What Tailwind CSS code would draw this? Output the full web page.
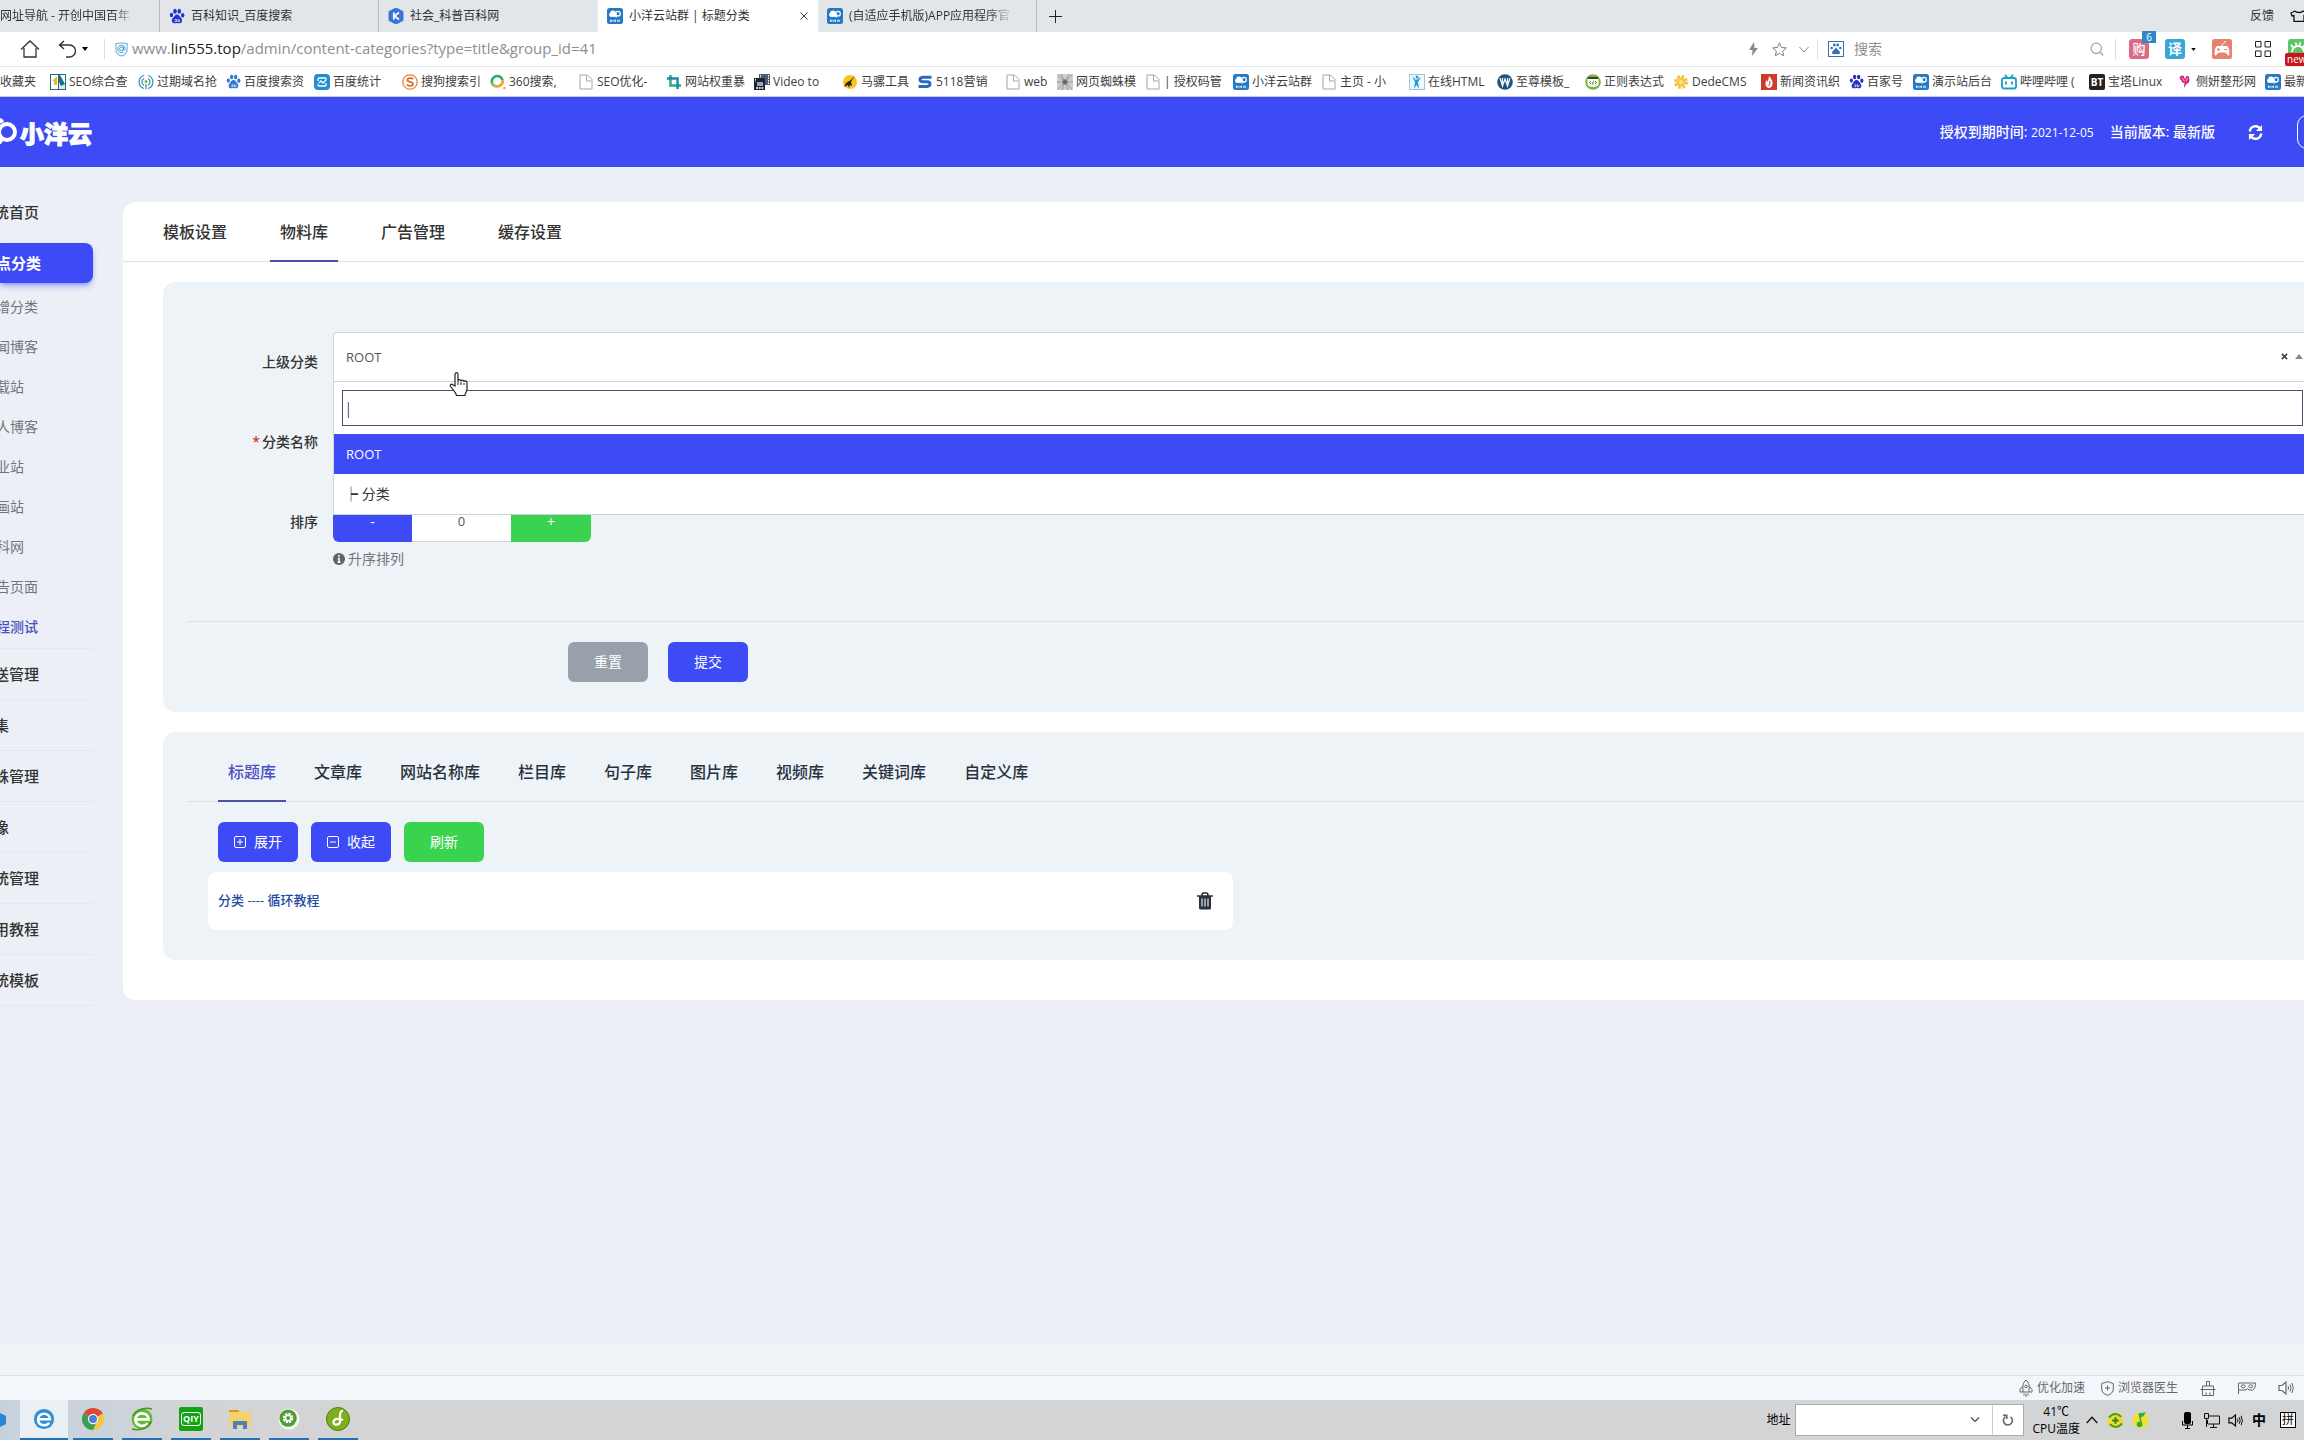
<!DOCTYPE html>
<html lang="zh-CN">
<head>
    <meta charset="UTF-8">
    <meta name="viewport" content="width=device-width, initial-scale=1.0">
    <title>小洋云站群 | 标题分类</title>
    <script src="https://cdn.jsdelivr.net/npm/@tailwindcss/browser@4"></script>
</head>
<body class="bg-[#eceff5] font-['Open_Sans','Noto_Sans_CJK_SC',sans-serif] text-sm text-[#333]">

    <!-- shared icons -->
    <svg class="hidden">
        <symbol id="i-page" viewBox="0 0 16 16"><path d="M2 1h7.5L14 5.500V15H2z" fill="#fff" stroke="#a5a5a5"/><path d="M8.500 1v6H13" fill="none" stroke="#a5a5a5"/></symbol>
        <symbol id="i-paw" viewBox="0 0 16 16"><ellipse cx="2.500" cy="7" rx="1.700" ry="2.300"/><ellipse cx="6" cy="3.200" rx="1.800" ry="2.500"/><ellipse cx="10.300" cy="3.200" rx="1.800" ry="2.500"/><ellipse cx="13.700" cy="7.200" rx="1.700" ry="2.300"/><path d="M8 6.500c2 0 2.700 2 4 3.300 1.700 1.700 1.600 5.400-1.200 5.400-1.200 0-1.700-.3-2.800-.3s-1.700.3-2.800.3c-2.900 0-3-3.800-1.200-5.400C5.300 8.500 6 6.500 8 6.500z"/><path d="M5.800 11.500h1.700v2H6v-1M9 10.800v2.700h1.600v-2" fill="none" stroke="#fff" stroke-width=".7"/></symbol>
        <symbol id="i-cloud" viewBox="0 0 16 16"><rect width="16" height="16" rx="2.500" fill="#2479c4"/><circle cx="6" cy="5.500" r="2.900" fill="#fff"/><circle cx="4" cy="6.800" r="2" fill="#fff"/><rect x="3.500" y="5.500" width="6" height="3.300" fill="#fff"/><circle cx="11" cy="5.700" r="2.300" fill="none" stroke="#fff" stroke-width="1.300"/><path d="M9.200 5.500v4" stroke="#fff" stroke-width="1.200"/><path d="M3 12.700h2.500M6.500 12.700H9M10.300 12.700H13" stroke="#fff" stroke-width="2" stroke-dasharray="1 .4"/></symbol>
        <symbol id="i-speaker" viewBox="0 0 16 16"><path d="M1 5.500h3L8 2v12l-4-3.500H1z" fill="none" stroke="currentColor" stroke-width="1.200"/><path d="M10 6q1.200 2 0 4M12 4.500q2 3.500 0 7M14 3q2.600 5 0 10" fill="none" stroke="currentColor"/></symbol>
        <symbol id="i-e" viewBox="0 0 24 24"><path d="M6.500 12.300h12c0-8-13-8-13 0 0 7.500 9 8 12.300 4" fill="none" stroke="#fff" stroke-width="2.800"/></symbol>
    </svg>

    <div class="flex min-h-screen flex-col overflow-hidden">

        <!-- browser tabs -->
        <div class="flex h-8 items-stretch bg-[#e2e6e9] text-xs text-[#333]">
            <a href="#" class="flex w-[160px] flex-none items-center border-r border-[#b9bec2]"><span class="w-[134px] overflow-hidden mask-r-from-85% whitespace-nowrap">网址导航 - 开创中国百年</span></a>
            <a href="#" class="flex w-[219px] flex-none items-center gap-[6px] border-r border-[#b9bec2] pl-[9px]"><svg class="size-4 fill-[#2b32c8]"><use href="#i-paw"/></svg>百科知识_百度搜索</a>
            <a href="#" class="flex w-[219px] flex-none items-center gap-[6px] pl-[9px]"><svg class="size-4" viewBox="0 0 16 16"><path d="M8 0l7 3.500v9L8 16l-7-3.500v-9z" fill="#3a74d8" stroke="#3a74d8"/><path d="M5.800 4.500v7M11 4.500L6.500 8l4.500 3.500" stroke="#fff" stroke-width="1.800" fill="none"/></svg>社会_科普百科网</a>
            <div class="flex w-[220px] flex-none items-center gap-[6px] bg-white pl-[9px]"><svg class="size-4"><use href="#i-cloud"/></svg><span class="flex-1">小洋云站群 | 标题分类</span>
                <button class="mr-[9px]" aria-label="关闭"><svg class="size-[10px]" viewBox="0 0 10 10"><path d="M1.500 1.500l7 7M8.500 1.500l-7 7" stroke="#333"/></svg></button></div>
            <a href="#" class="flex w-[219px] flex-none items-center gap-[6px] border-r border-[#b9bec2] pl-[9px]"><svg class="size-4 flex-none"><use href="#i-cloud"/></svg><span class="w-[164px] overflow-hidden mask-r-from-85% whitespace-nowrap">(自适应手机版)APP应用程序官</span></a>
            <button class="ml-3" aria-label="新标签页"><svg class="size-[13px]" viewBox="0 0 13 13"><path d="M6.500 0v13M0 6.500h13" stroke="#222"/></svg></button>
            <div class="-mr-1 ml-auto flex items-center gap-4"><button>反馈</button>
                <svg class="h-3 w-[18px]" viewBox="0 0 18 12"><path d="M5 1L1 3l1 3 2-.5V11.500h10V5.500l2 .5 1-3-4-2c-1 2-7 2-8 0z" fill="none" stroke="#111" stroke-width="1.300"/></svg></div>
        </div>

        <!-- address bar -->
        <div class="flex h-[35px] items-center border-b border-[#e3e6e6] bg-white">
            <button class="ml-5" aria-label="主页"><svg class="h-[18px] w-5" viewBox="0 0 20 18"><path d="M1 9.500L10 1l9 8.500M4 8v9h12V8" fill="none" stroke="#333" stroke-width="1.300"/></svg></button>
            <button class="ml-[18px] flex items-center gap-1" aria-label="后退"><svg class="h-[18px] w-5" viewBox="0 0 20 18"><path d="M6 1L1.500 5 6 9M2 5h9.500a6 6 0 0 1 0 12H8" fill="none" stroke="#333" stroke-width="1.400"/></svg><svg class="h-1 w-[6px]" viewBox="0 0 6 4"><path d="M0 0h6L3 4z"/></svg></button>
            <span class="ml-4 h-5 w-px bg-[#ddd]"></span>
            <svg class="ml-[9px] size-[15px]" viewBox="0 0 16 16"><path d="M8 1c3 0 6 1 6 1v6c0 4-3 6-6 7-3-1-6-3-6-7V2s3-1 6-1z" fill="none" stroke="#6cb1dd" stroke-width="1.200"/><circle cx="8" cy="7.300" r="2" fill="none" stroke="#3a93cf"/><path d="M10 5v3.300c1 1.200 1.900 0 1.900-1 0-5.200-7.800-5-7.800 0 0 4 4 4.600 6 3.300" fill="none" stroke="#3a93cf"/></svg>
            <a href="#" class="ml-[3px] text-[15px] text-[#8e8e8e]">www.<span class="text-[#222]">lin555.top</span>/admin/content-categories?type=title&amp;group_id=41</a>
            <div class="ml-auto flex items-center">
                <svg class="h-[14px] w-[9px]" viewBox="0 0 9 14"><path d="M5 0L0 8h3.500L3 14l6-8H5.500z" fill="#8a8a8a"/></svg>
                <svg class="ml-[14px] size-[15px]" viewBox="0 0 16 16"><path d="M8 1l2.100 4.800 5.200.5-4 3.400 1.200 5.100L8 12.100l-4.500 2.700 1.200-5.100-4-3.400 5.200-.5z" fill="none" stroke="#777"/></svg>
                <svg class="ml-3 h-[7px] w-[10px]" viewBox="0 0 10 7"><path d="M.5 1L5 6l4.500-5" fill="none" stroke="#888"/></svg>
                <span class="ml-2 h-5 w-px bg-[#ddd]"></span>
                <svg class="ml-[10px] size-4" viewBox="0 0 16 16"><rect x=".5" y=".5" width="15" height="15" fill="#fff" stroke="#3b6fb5"/><g fill="#3b6fb5"><circle cx="3.700" cy="7" r="1.300"/><circle cx="6.300" cy="4" r="1.400"/><circle cx="9.700" cy="4" r="1.400"/><circle cx="12.300" cy="7" r="1.300"/><path d="M8 6.500l3.800 4.200c.9 2-.6 3-3.800 2.300-3.200.7-4.700-.3-3.800-2.300z"/></g></svg>
                <label class="sr-only" for="web-search">搜索</label>
                <input id="web-search" placeholder="搜索" class="ml-[10px] w-[236px] text-[14px] outline-none placeholder:text-[#8e8e8e]">
                <svg class="size-[14px]" viewBox="0 0 14 14"><circle cx="6.300" cy="6.300" r="5.200" fill="none" stroke="#aaa" stroke-width="1.300"/><path d="M10 10l3 3.500" stroke="#aaa" stroke-width="1.300"/></svg>
                <span class="ml-[11px] h-5 w-px bg-[#ddd]"></span>
                <button class="relative ml-[13px] size-5 rounded-[3px] bg-[#dd6a85] text-[13px] leading-5 font-medium text-white">购<span class="absolute -top-2 left-[13px] h-3 w-[14px] bg-[#2f88cb] text-[10px] leading-3">6</span></button>
                <button class="ml-4 size-5 rounded-[3px] bg-[#35a7db] text-[14px] leading-5 font-bold text-white">译</button>
                <svg class="ml-[6px] h-[3px] w-[5px]" viewBox="0 0 6 4"><path d="M0 0h6L3 4z"/></svg>
                <svg class="ml-4 size-5" viewBox="0 0 20 20"><rect width="20" height="20" rx="2.500" fill="#e58270"/><path d="M10 7c0-4 3-1 3-5" stroke="#fff" fill="none"/><path d="M5 7h10c2 0 3 9 2 9.500-1.500.8-3-3-4-3H7c-1 0-2.500 3.800-4 3C2 16 3 7 5 7z" fill="#fff"/><path d="M5 10.500h3M6.500 9v3M12 10.500h3" stroke="#e58270"/></svg>
                <svg class="ml-[23px] size-4" viewBox="0 0 16 16"><path d="M.5.5h5.500v5.500H.5zM10 .5h5.500v5.500H10zM.5 10h5.500v5.500H.5zM10 10h5.500v5.500H10z" fill="none" stroke="#222"/></svg>
                <div class="relative -mr-1 ml-[17px] h-5 w-5 rounded-[3px] bg-[#5cc46b]"><svg class="size-5" viewBox="0 0 20 20"><path d="M4 13a6 6 0 0 1 12 0M3 6l2 2M7.500 3.500l1 2.500M12.500 3.500l-1 2.500M17 6l-2 2" stroke="#fff" stroke-width="1.800" fill="none"/></svg><span class="absolute -bottom-[7px] -left-[3px] w-8 rounded-[2px] bg-[#c8151b] px-[2px] text-[10px] leading-[13px] text-white">new</span></div>
            </div>
        </div>

        <!-- bookmarks -->
        <nav class="flex h-[30px] items-center border-b border-[#c3cbe8] bg-white text-xs whitespace-nowrap text-[#3d3d3d] *:flex *:flex-none *:items-center *:gap-[3px]">
            <a href="#" class="w-[50px]">收藏夹</a>
            <a href="#" class="w-[88px]"><svg class="size-4" viewBox="0 0 16 16"><rect width="16" height="16" fill="#1b6f86"/><path d="M1 1h7v14H1zM10 1h5v9z" fill="#fff"/><path d="M2 7l5-5v9H4V7z" fill="#e5ba2f"/><path d="M9 15V8l2 4 4-2v5z" fill="#dfe9ec"/></svg>SEO综合查</a>
            <a href="#" class="w-[88px]"><svg class="size-4" viewBox="0 0 16 16" fill="none" stroke="#3f95b8" stroke-width="1.300"><path d="M6 1.500a6.800 6.800 0 0 0 0 13M10 1.500a6.800 6.800 0 0 1 0 13M6 4.500a4 4 0 0 0 0 7M10 4.500a4 4 0 0 1 0 7M8 10v5"/><circle cx="8" cy="7.500" r="1.500" fill="#6fc04c" stroke="none"/></svg>过期域名抢</a>
            <a href="#" class="w-[88px]"><svg class="size-[15px] fill-[#2f79d0]"><use href="#i-paw"/></svg>百度搜索资</a>
            <a href="#" class="w-[88px]"><svg class="size-4" viewBox="0 0 16 16"><rect width="16" height="16" rx="4" fill="#1f8fd0"/><path d="M4 7V5q0-1 1-1h6q1 0 1 1v1M12 9v2q0 1-1 1H5q-1 0-1-1v-1M5 9l2-2 2 2 3-3" fill="none" stroke="#fff" stroke-width="1.300"/></svg>百度统计</a>
            <a href="#" class="w-[88px]"><svg class="size-4" viewBox="0 0 16 16"><circle cx="8" cy="8" r="7.200" fill="none" stroke="#e9853c" stroke-width="1.300"/><path d="M11.200 5.200C9.500 3.600 5.300 3.800 5.300 6c0 2.500 5.700 1.300 5.700 3.900 0 2.300-4.300 2.500-6.200.7" fill="none" stroke="#e66a1f" stroke-width="1.800"/></svg>搜狗搜索引</a>
            <a href="#" class="w-[88px]"><svg class="size-4" viewBox="0 0 16 16" fill="none" stroke-width="2.600"><path d="M2 9a5.300 5.300 0 0 1 10.500-3" stroke="#2fa866"/><path d="M12.500 6c1 5-4 7.500-7.500 6" stroke="#e7a43a"/><path d="M5 12Q2.300 11 2 8.500" stroke="#8cbf4a"/><circle cx="14.300" cy="14" r=".5" stroke="#e7a43a" stroke-width="1.400"/></svg>360搜索,</a>
            <a href="#" class="w-[88px]"><svg class="size-4"><use href="#i-page"/></svg>SEO优化-</a>
            <a href="#" class="w-[88px]"><svg class="size-4" viewBox="-1 -1 18 18" fill="none" stroke-width="2.800"><path d="M4 0v12h12" stroke="#2fa58b"/><path d="M0 4h12v12" stroke="#1d8f9e"/></svg>网站权重暴</a>
            <a href="#" class="w-[88px]"><svg class="size-4" viewBox="0 0 16 16"><path d="M5 0h11v11H5z" fill="#4d5a78"/><path d="M0 4h11v12H0z" fill="#20232e"/><path d="M6.500 1v3M14.500 1v9M1.500 5v3" stroke="#fff" stroke-dasharray="1.500 1"/><path d="M3 8h6v4H3z" fill="#9aa5bf"/><path d="M2 14h8" stroke="#fff" stroke-width="1.500" stroke-dasharray="2 .7"/></svg>Video to</a>
            <a href="#" class="w-[75px]"><svg class="size-4" viewBox="0 0 16 16"><circle cx="8" cy="8" r="7" fill="#f5c51c"/><path d="M13 1L9 6l-5 3-2 4 4-2 1 3 1-3 2 1-1-4z" fill="#29241a"/></svg>马骡工具</a>
            <a href="#" class="w-[88px]"><svg class="size-4" viewBox="0 0 16 16"><path d="M14.500 3.300H6.500Q3 3.300 3 5.500T6 7.700h4q3 0 3 2.200t-3 2.500H1.500" fill="none" stroke="#2a6bc0" stroke-width="3"/></svg>5118营销</a>
            <a href="#" class="w-[52px]"><svg class="size-4"><use href="#i-page"/></svg>web</a>
            <a href="#" class="w-[88px]"><svg class="size-4" viewBox="0 0 16 16"><rect width="16" height="16" fill="#cdcdc9"/><path d="M1 1l6 6M15 1L9 7M1 15l6-6M15 15l-6-6M0 8h6M10 8h6M4 0l3 6M12 0L9 6M5 16l2-6M11 16l-2-6" stroke="#8b8b88" stroke-width=".8"/><circle cx="8" cy="8" r="2.600" fill="#666" stroke="#999"/></svg>网页蜘蛛模</a>
            <a href="#" class="w-[88px]"><svg class="size-4"><use href="#i-page"/></svg>| 授权码管</a>
            <a href="#" class="w-[88px]"><svg class="size-4"><use href="#i-cloud"/></svg>小洋云站群</a>
            <a href="#" class="w-[88px]"><svg class="size-4"><use href="#i-page"/></svg>主页 - 小</a>
            <a href="#" class="w-[88px]"><svg class="size-4" viewBox="0 0 16 16"><rect x=".5" y=".5" width="15" height="15" fill="#eef8fd" stroke="#9dc4d8"/><circle cx="8" cy="3" r="1.500" fill="#1b9fd4"/><path d="M3 2l4 4 5-3-3 5 1 7-2.500-4L5 15l1-7z" fill="#1b9fd4"/></svg>在线HTML</a>
            <a href="#" class="w-[88px]"><svg class="size-4" viewBox="0 0 16 16"><circle cx="8" cy="8" r="7.800" fill="#1d5584"/><path d="M3 4l2.500 8L8 5l2.500 7L13 4M5.500 4v5M10.500 4v5" fill="none" stroke="#fff" stroke-width="1.200"/></svg>至尊模板_</a>
            <a href="#" class="w-[88px]"><svg class="size-4" viewBox="0 0 16 16"><circle cx="8" cy="8" r="7.800" fill="#7cb342"/><path d="M2.500 5h11v5c0 4-11 4-11 0z" fill="#fff"/><path d="M3 4h10" stroke="#2d4c24" stroke-width="2"/><path d="M6 7L4.500 8.500 6 10M10 7l1.500 1.500L10 10M8.500 7l-1 3.500" stroke="#4d7a2d" fill="none"/></svg>正则表达式</a>
            <a href="#" class="w-[88px]"><svg class="size-4" viewBox="0 0 16 16"><circle cx="8" cy="8" r="5.500" fill="none" stroke="#f2bf3a" stroke-width="3" stroke-dasharray="2.600 1.700"/><circle cx="8" cy="8" r="4.800" fill="#f6c945"/><circle cx="8" cy="8" r="2" fill="#fbe39a"/></svg>DedeCMS</a>
            <a href="#" class="w-[88px]"><svg class="size-4" viewBox="0 0 16 16"><rect width="16" height="16" fill="#cf3a2a"/><path d="M8 2c3 3 4 6 3.500 8.500C11 13 9 14 8 14s-3.500-1-3.500-4C4.500 8 5 7 5.500 6l1 2C7 6 8 4.500 8 2z" fill="#fff"/><path d="M8.500 7c1 2 0 4-1 5" stroke="#cf3a2a" fill="none"/></svg>新闻资讯织</a>
            <a href="#" class="w-[64px]"><svg class="size-[15px] fill-[#2b32b8]"><use href="#i-paw"/></svg>百家号</a>
            <a href="#" class="w-[88px]"><svg class="size-4"><use href="#i-cloud"/></svg>演示站后台</a>
            <a href="#" class="w-[88px]"><svg class="size-4" viewBox="0 0 16 16" fill="none" stroke="#1b9fc9" stroke-width="1.800"><rect x="1" y="4" width="14" height="10.500" rx="2"/><path d="M4 .8L6.500 4M12 .8L9.500 4M5 7.500v3M11 7.500v3"/></svg>哔哩哔哩 (</a>
            <a href="#" class="w-[88px]"><b class="size-4 rounded-[2px] bg-[#222] text-center text-[10px] leading-4 text-white">BT</b>宝塔Linux</a>
            <a href="#" class="w-[88px]"><svg class="size-4" viewBox="0 0 16 16"><path d="M3.500 2c2.500-1.500 4 0 4 2.500l1 .5c-.5-3 3-4 3.500-1.500C13 6 12.500 9 10 9.500c-1.500 1-1.500 3-3 4.500l.5-5C5.500 9 4.500 8 4.500 6.500 2.800 6 2.300 3.500 3.500 2z" fill="#d0217c"/><path d="M5 3.500l2.500 4M10.500 4L9 7.500" stroke="#fff" stroke-width=".7"/></svg>侧妍整形网</a>
            <a href="#" class="w-[38px]"><svg class="size-4 flex-none"><use href="#i-cloud"/></svg>最新</a>
        </nav>

        <!-- site header -->
        <header class="flex h-[70px] items-center bg-[#3d4bf6] text-white">
            <svg class="h-8 w-[18px]" viewBox="0 0 18 32"><circle cx="7" cy="16" r="8" fill="none" stroke="#fff" stroke-width="4"/><path d="M-1 2q4 0 5 4l-5 2zM-2 22l5 1q0 5-5 6z" fill="#fff"/></svg>
            <h1 class="ml-[2px] pt-1 text-[24px] leading-8 font-black [-webkit-text-stroke:1px_white]">小洋云</h1>
            <div class="-mr-[30px] ml-auto flex items-center gap-4">
                <span class="font-medium">授权到期时间: <span class="text-xs">2021-12-05</span></span>
                <span class="font-medium">当前版本: 最新版</span>
                <button class="ml-[17px]" aria-label="刷新"><svg class="size-[15px]" viewBox="0 0 16 16"><path d="M2 7a6 6 0 0 1 11-3M14 9a6 6 0 0 1-11 3" fill="none" stroke="#fff" stroke-width="2.600"/><path d="M15 0v6.500H8.500zM1 16V9.500h6.500z" fill="#fff"/></svg></button>
                <button class="ml-[18px] h-[34px] w-[37px] rounded-[10px] border border-white" aria-label="账户"></button>
            </div>
        </header>

        <div class="flex flex-1 items-start">
            <!-- sidebar -->
            <aside class="w-[93px] flex-none pt-[25px] whitespace-nowrap">
                <a href="#" class="-ml-[21px] block text-[15px] leading-10 font-medium">系统首页</a>
                <a href="#" class="mt-[11px] block h-10 rounded-r-lg bg-[#3d4bf6] text-[15px] leading-10 font-bold text-white shadow-md shadow-[#3d4bf6]/40"><span class="-ml-[19px]">站点分类</span></a>
                <ul class="mt-1 mb-px -ml-[18px] leading-10 text-[#70757c]">
                    <li><a href="#">新增分类</a></li>
                    <li><a href="#">新闻博客</a></li>
                    <li><a href="#">下载站</a></li>
                    <li><a href="#">个人博客</a></li>
                    <li><a href="#">企业站</a></li>
                    <li><a href="#">漫画站</a></li>
                    <li><a href="#">百科网</a></li>
                    <li><a href="#">广告页面</a></li>
                    <li><a href="#" class="font-medium text-[#4a4fc4]">教程测试</a></li>
                </ul>
                <ul class="-ml-[21px] border-b border-[#e3e7ec] text-[15px] leading-[50px] font-medium *:border-t *:border-[#e3e7ec]">
                    <li><a href="#">推送管理</a></li>
                    <li><a href="#">采集</a></li>
                    <li><a href="#">蜘蛛管理</a></li>
                    <li><a href="#">镜像</a></li>
                    <li><a href="#">系统管理</a></li>
                    <li><a href="#">使用教程</a></li>
                    <li><a href="#">系统模板</a></li>
                </ul>
            </aside>

            <main class="mt-[35px] -mr-16 ml-[30px] flex-1 rounded-xl bg-white pb-10">
                <nav class="flex h-[60px] gap-[33px] border-b border-[#dde1e6] pl-[30px] text-base leading-[60px] font-medium *:h-[60px] *:px-[10px]">
                    <a href="#">模板设置</a>
                    <a href="#" class="border-b-2 border-[#4a4fae]">物料库</a>
                    <a href="#">广告管理</a>
                    <a href="#">缓存设置</a>
                </nav>

                <form class="mx-10 mt-5 rounded-xl bg-[#eef3f8] pt-[50px] pr-[18px] pb-[30px]">
                    <div class="flex h-20">
                        <label for="parent" class="w-[155px] text-right leading-[60px] font-medium">上级分类</label>
                        <div class="relative ml-[15px] h-[50px] flex-1">
                            <select id="parent" class="h-[50px] w-full appearance-none rounded-t border border-[#ced4da] bg-white px-3 text-[13px] text-[#555]">
                                <option>ROOT</option>
                                <option>┝ 分类</option>
                            </select>
                            <div class="absolute top-4 right-[3px] flex items-center gap-[7px]">
                                <button type="button" class="py-[5px]" aria-label="清除"><svg class="size-[7px]" viewBox="0 0 8 8"><path d="M1 1l6 6M7 1L1 7" stroke="#444" stroke-width="1.800"/></svg></button>
                                <svg class="mr-1 h-[5px] w-2" viewBox="0 0 8 5"><path d="M0 5h8L4 0z" fill="#888"/></svg>
                            </div>
                            <div class="absolute top-[50px] right-0 left-0 z-10 border border-t-0 border-[#ced4da] bg-white">
                                <div class="p-2 pr-[6px]"><input aria-label="搜索分类" value="|" class="block h-9 w-full border border-[#4b4f72] px-px text-base font-light text-black outline-none"></div>
                                <ul class="leading-10">
                                    <li class="bg-[#3d4bf6] px-3 text-[13px] leading-10 text-white">ROOT</li>
                                    <li class="px-[10px]">┝ 分类</li>
                                </ul>
                            </div>
                            <svg class="absolute top-[39px] left-[116px] z-20 h-[26px] w-5" viewBox="0 0 20 26"><path d="M6 15V3.500C6 1 9 1 9 3.500V10c0-2 3-1.600 3 .5 0-2 3-1.600 3 .5 0-1.800 3-1.500 3 .8V18c0 3-2 4-2 6.500H7.500C7 21 4 19 1.500 15.500c-1-2 1-3 2.300-1.800z" fill="#fff" stroke="#222" stroke-width="1.200"/><path d="M9 10v4M12 11v3M15 12v2" stroke="#222"/></svg>
                        </div>
                    </div>
                    <div class="flex h-20">
                        <label for="name" class="w-[155px] text-right leading-[60px] font-medium"><span class="mr-[2px] text-[#c22]">*</span>分类名称</label>
                        <input id="name" class="mt-3 ml-[15px] h-[38px] flex-1 rounded border border-[#ced4da] bg-white px-3">
                    </div>
                    <div class="flex h-20">
                        <label for="sort" class="w-[155px] text-right leading-[60px] font-medium">排序</label>
                        <div class="mt-[10px] ml-[15px]">
                            <div class="flex h-10 overflow-hidden rounded-md">
                                <button type="button" class="w-[79px] bg-[#3d4bf6] text-white">-</button>
                                <input id="sort" value="0" class="w-[99px] border-b border-[#ced4da] bg-white text-center text-[13px] text-[#555]">
                                <button type="button" class="w-20 bg-[#3ad350] text-white">+</button>
                            </div>
                            <p class="mt-[6px] flex items-center gap-[3px] leading-[22px] text-[#70757c]"><svg class="size-3" viewBox="0 0 12 12"><circle cx="6" cy="6" r="6" fill="#5f646b"/><path d="M6 2v1.800M4.800 5.500H6V9M4.500 9.300h3" stroke="#fff" stroke-width="1.600"/></svg>升序排列</p>
                        </div>
                    </div>
                    <hr class="mt-[49px] ml-6 border-[#dde2e7]">
                    <div class="mt-5 ml-[405px] flex gap-5 text-white *:h-10 *:w-20 *:rounded-md">
                        <button type="reset" class="bg-[#98a1ab]">重置</button>
                        <button class="bg-[#3d4bf6]">提交</button>
                    </div>
                </form>

                <section class="mx-10 mt-5 rounded-xl bg-[#eef3f8] pt-[10px] pb-[30px]">
                    <nav class="ml-6 flex h-[60px] gap-[18px] border-b border-[#dde2e7] pl-[31px] text-base leading-[60px] font-medium text-[#26323f] *:h-[60px] *:px-[10px]">
                        <a href="#" class="border-b-2 border-[#4a4fae] text-[#4a4fc4]">标题库</a>
                        <a href="#">文章库</a>
                        <a href="#">网站名称库</a>
                        <a href="#">栏目库</a>
                        <a href="#">句子库</a>
                        <a href="#">图片库</a>
                        <a href="#">视频库</a>
                        <a href="#">关键词库</a>
                        <a href="#">自定义库</a>
                    </nav>
                    <div class="mt-5 ml-[55px] flex gap-[13px] text-white *:flex *:h-10 *:w-20 *:items-center *:justify-center *:gap-2 *:rounded-md">
                        <button class="bg-[#3d4bf6]"><svg class="size-3" viewBox="0 0 12 12"><path d="M.5 2q0-1.500 1.500-1.500h8q1.500 0 1.500 1.500v8q0 1.500-1.500 1.500H2Q.5 11.500.5 10zM3 6h6M6 3v6" fill="none" stroke="#fff"/></svg>展开</button>
                        <button class="bg-[#3d4bf6]"><svg class="size-3" viewBox="0 0 12 12"><path d="M.5 2q0-1.500 1.500-1.500h8q1.500 0 1.500 1.500v8q0 1.500-1.500 1.500H2Q.5 11.500.5 10zM3 6h6" fill="none" stroke="#fff"/></svg>收起</button>
                        <button class="bg-[#3ad350]">刷新</button>
                    </div>
                    <div class="mt-[10px] ml-[45px] flex h-[58px] w-[1025px] items-center justify-between rounded-lg bg-white pr-5 pl-[10px]">
                        <a href="#" class="pb-[2px] text-[13px] font-medium text-[#1f4ba5]">分类 ---- 循环教程</a>
                        <button aria-label="删除"><svg class="h-[18px] w-4" viewBox="0 0 16 18"><path d="M0 4h16M5 3.500Q5 1 6.500 1h3Q11 1 11 3.500" fill="none" stroke="#26323f" stroke-width="1.600"/><path d="M2 4h12v12q0 1.500-1.500 1.500h-9Q2 17.500 2 16z" fill="#26323f"/><path d="M5 6.500v8M8 6.500v8M11 6.500v8" stroke="#fff" stroke-width="1.100"/></svg></button>
                    </div>
                </section>
            </main>
        </div>

        <!-- page footer and browser status bar -->
        <footer class="h-[31px] bg-[#f1f4f7]"></footer>
        <div class="flex h-[25px] items-center justify-end border-t border-[#dde1e5] bg-[#f3f6fa] pr-[10px] text-xs text-[#666]">
            <button class="flex items-center gap-1"><svg class="h-[18px] w-[14px]" viewBox="0 0 14 18"><path d="M7 1c3 2.500 3.500 6 3 12H4C3.500 7 4 3.500 7 1zM3.800 7L1 10.500V13h3M10.200 7l2.800 3.500V13h-3M5 14.500v2M7 14.500V18M9 14.500v2" fill="none" stroke="#666"/><circle cx="7" cy="7.500" r="1.300" fill="none" stroke="#666"/></svg>优化加速</button>
            <button class="ml-4 flex items-center gap-1"><svg class="h-[15px] w-[13px]" viewBox="0 0 13 15"><path d="M6.500.7L12.300 2.500V8q0 4.500-5.800 6.300Q.7 12.500.7 8V2.500zM4 7h5M6.500 4.500v5" fill="none" stroke="#666"/></svg>浏览器医生</button>
            <button class="ml-[22px]" aria-label="清理"><svg class="h-[15px] w-4" viewBox="0 0 16 15"><path d="M6.500 5V.5h3V5M2.500 8.500V5h11v3.500M.5 8.500h15M2.500 8.500v6h11v-6M6 14.500v-3M10 14.500v-3" fill="none" stroke="#666"/></svg></button>
            <button class="ml-[22px]" aria-label="无痕"><svg class="h-3 w-[18px]" viewBox="0 0 18 12"><path d="M.5 12V1h17q0 6-3 7H11L9.500 6.500 8 8H.5" fill="none" stroke="#666"/><ellipse cx="5.200" cy="4.300" rx="2" ry="1.500" fill="none" stroke="#666"/><ellipse cx="12.700" cy="4.300" rx="2" ry="1.500" fill="none" stroke="#666"/></svg></button>
            <button class="ml-[22px]" aria-label="静音"><svg class="size-4"><use href="#i-speaker"/></svg></button>
        </div>

        <!-- windows taskbar -->
        <div class="flex h-10 items-stretch bg-linear-to-r from-[#c5d2de] from-0% via-[#d3d4d5] via-10% to-[#d3d4d6] text-xs text-black">
            <div class="flex w-5 items-center"><svg class="h-[14px] w-[6px]" viewBox="0 0 6 14"><path d="M0 0l6 3v8l-6 3z" fill="#2c86cf"/></svg></div>
            <div class="flex *:flex *:w-10 *:items-center *:justify-center *:border-b-2 *:border-[#2472b4]">
                <button class="mr-[5px] min-w-12 bg-[#e9eff3]" aria-label="浏览器"><svg class="size-[22px]" viewBox="0 0 24 24"><circle cx="12" cy="12" r="11" fill="#2f8fd8"/><use href="#i-e"/></svg></button>
                <button class="mr-[9px]" aria-label="Chrome"><svg class="size-[22px]" viewBox="0 0 24 24"><circle cx="12" cy="12" r="12" fill="#f5c83b"/><path d="M12 12L1.600 6A12 12 0 0 1 22.400 6z" fill="#d9493c"/><path d="M12 12L1.600 6A12 12 0 0 0 12 24l4-9z" fill="#3c9e55"/><path d="M7 6.500h15.600L21 3 5 2z" fill="#d9493c"/><circle cx="12" cy="12" r="5.600" fill="#fff"/><circle cx="12" cy="12" r="4.400" fill="#4a80d9"/></svg></button>
                <button class="mr-[9px]" aria-label="360浏览器"><svg class="size-6" viewBox="0 0 24 24"><circle cx="12" cy="12" r="10.500" fill="#69b83c"/><use href="#i-e"/><path d="M3 9Q10-1 22 2M21 15Q14 25 2 22" fill="none" stroke="#4a9427" stroke-width="1.600"/></svg></button>
                <button class="mr-[9px]" aria-label="爱奇艺"><span class="flex size-6 items-center justify-center rounded-[2px] bg-[#12a312]"><span class="rounded-[3px] border border-white px-px text-[9px] leading-3 font-bold text-white">QIY</span></span></button>
                <button class="mr-[9px]" aria-label="文件夹"><svg class="h-5 w-[22px]" viewBox="0 0 22 20"><path d="M0 1h9l1.500 2H0z" fill="#d99a1c"/><path d="M0 3h22v14H0z" fill="#f6d16b"/><path d="M4 20v-8h14v8h-4v-4H8v4z" fill="#4f83b5"/></svg></button>
                <button class="mr-[9px]" aria-label="设置"><svg class="size-[22px]" viewBox="0 0 24 24"><circle cx="12" cy="12" r="11.500" fill="#f4f7f1"/><circle cx="11" cy="11" r="9.500" fill="#4f9e2f"/><circle cx="11" cy="11" r="4" fill="none" stroke="#fff" stroke-width="3.500" stroke-dasharray="2.200 .9"/><circle cx="11" cy="11" r="3" fill="none" stroke="#fff" stroke-width="1.500"/></svg></button>
                <button aria-label="音乐"><svg class="size-6" viewBox="0 0 24 24"><circle cx="12" cy="12" r="11.500" fill="#7eae1c" stroke="#55790f"/><path d="M17 3.500Q14 4 14 9v5c0 5-7 4.500-6.500 1S12 11 17 13" fill="none" stroke="#fff" stroke-width="2.200"/></svg></button>
            </div>
            <div class="ml-auto flex items-center pr-2">
                <label for="addr">地址</label>
                <div class="ml-[5px] flex h-[32px] w-[229px] items-center border border-[#aaa] bg-white"><input id="addr" class="w-[174px] outline-none"><svg class="h-[6px] w-[10px]" viewBox="0 0 10 6"><path d="M1 .5l4 4 4-4" fill="none" stroke="#444" stroke-width="1.200"/></svg>
                    <button class="ml-3 flex h-full flex-1 items-center justify-center border-l border-[#ccc]" aria-label="刷新"><svg class="size-3" viewBox="0 0 12 12"><path d="M8.500 2.800a4.500 4.500 0 1 1-5-.1M1 1.200h3.800V5" fill="none" stroke="#666" stroke-width="1.600"/></svg></button></div>
                <div class="ml-2 text-center leading-[17px]">41℃<br>CPU温度</div>
                <svg class="ml-[6px] h-2 w-3" viewBox="0 0 12 8"><path d="M.7 7L6 1.200 11.300 7" fill="none" stroke="#111" stroke-width="1.300"/></svg>
                <svg class="ml-[9px] size-[17px]" viewBox="0 0 18 18"><circle cx="9" cy="9" r="8.500" fill="#f0dc2c"/><path d="M2 6q6-7 13-1M16 12q-6 7-13 1" fill="none" stroke="#3d9e32" stroke-width="2"/><path d="M5.500 9h7M9 5.500v7" stroke="#2b8a2b" stroke-width="2.200"/></svg>
                <svg class="ml-2 size-[17px]" viewBox="0 0 18 18"><circle cx="9" cy="9" r="8.500" fill="#f0e22c"/><circle cx="8" cy="13" r="3" fill="#2fa84a"/><path d="M10 13L7.500 2l6-1-2 3-2 1" fill="#2fa84a" stroke="#2fa84a" stroke-width="1.200"/></svg>
                <svg class="ml-[33px] h-[17px] w-[11px]" viewBox="0 0 11 17"><rect x="2" width="7" height="12" rx="2"/><path d="M.5 9v4h10V9M5.500 13v4M3 16.500h5" fill="none" stroke="#000"/></svg>
                <svg class="ml-[11px] h-[15px] w-4" viewBox="0 0 16 15"><path d="M5 3h10.500v8H3.500V7M9.500 11v3M6 14.500h7M.5.500h4v5h-4zM2.500 6v8" fill="none" stroke="#111"/></svg>
                <svg class="ml-2 size-[15px]"><use href="#i-speaker"/></svg>
                <span class="ml-[9px] text-[14px] font-bold">中</span>
                <span class="ml-[14px] flex size-4 items-center justify-center border border-black bg-white text-xs leading-none">拼</span>
            </div>
        </div>
    </div>
</body>
</html>
